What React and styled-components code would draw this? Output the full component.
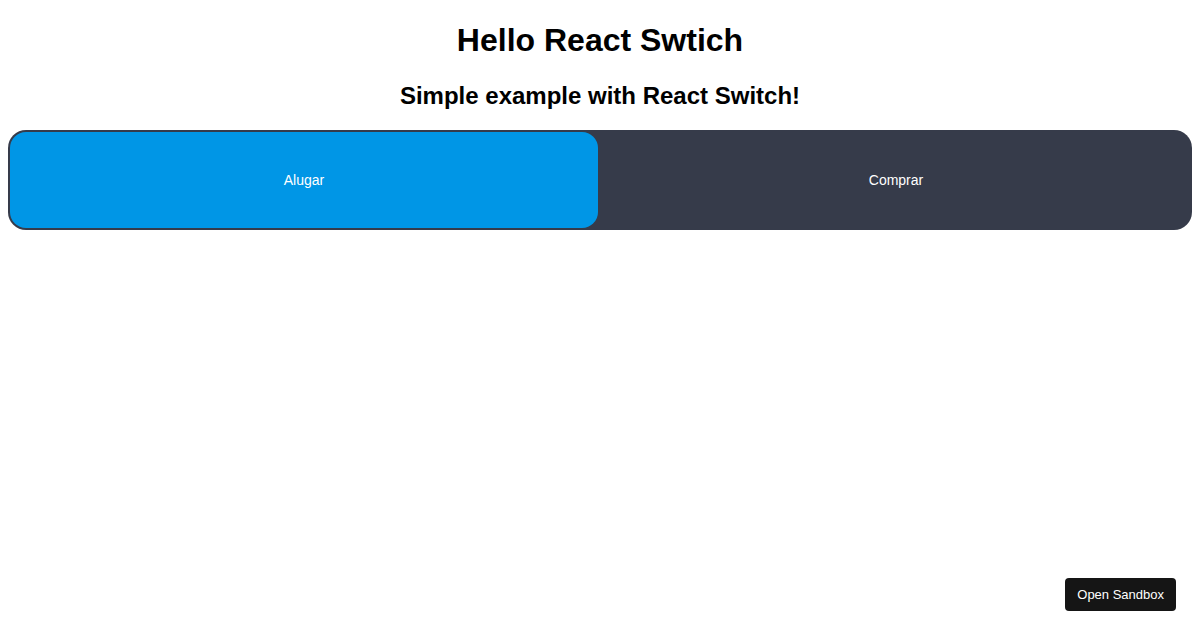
import React, { useState } from "react";
import styled, { createGlobalStyle } from "styled-components";

const GlobalStyle = createGlobalStyle`
  body {
    margin: 8px;
    font-family: "Liberation Sans", Arial, sans-serif;
    background: #fff;
  }
`;

export default function App() {
  const [selected, setSelected] = useState("alugar");

  return (
    <>
      <GlobalStyle />
      <Page>
        <h1>Hello React Swtich</h1>
        <h2>Simple example with React Switch!</h2>
        <Switch>
          <Option active={selected === "alugar"} onClick={() => setSelected("alugar")}>
            Alugar
          </Option>
          <Option active={selected === "comprar"} onClick={() => setSelected("comprar")}>
            Comprar
          </Option>
        </Switch>
      </Page>
      <SandboxButton>Open Sandbox</SandboxButton>
    </>
  );
}

const Page = styled.div`
  text-align: center;

  h1 {
    font-size: 32px;
    margin: 14px 0 21px;
  }

  h2 {
    font-size: 24px;
    margin: 23px 0 20px;
  }
`;

const Switch = styled.div`
  display: flex;
  gap: 4px;
  height: 100px;
  padding: 2px;
  box-sizing: border-box;
  background: #363b4a;
  border-radius: 18px;
`;

const Option = styled.div`
  flex: 1;
  display: flex;
  align-items: center;
  justify-content: center;
  font-size: 14px;
  color: #fff;
  border-radius: 16px;
  background: ${(p) => (p.active ? "#0096e6" : "transparent")};
  cursor: pointer;
`;

const SandboxButton = styled.button`
  position: fixed;
  right: 24px;
  bottom: 19px;
  height: 33px;
  padding: 0 12px;
  background: #151515;
  color: #fff;
  border: none;
  border-radius: 4px;
  font-family: "Liberation Sans", Arial, sans-serif;
  font-size: 13px;
`;
